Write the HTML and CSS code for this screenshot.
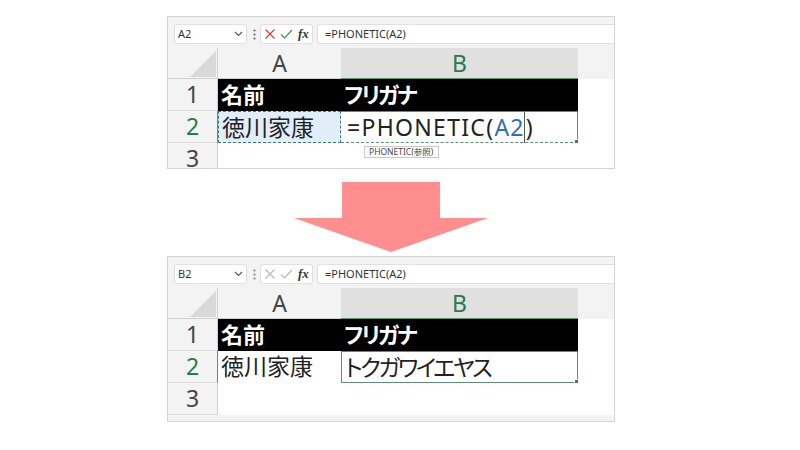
FILE: index.html
```html
<!DOCTYPE html>
<html lang="ja">
<head>
    <meta charset="UTF-8">
    <title>PHONETIC関数</title>
    <link rel="stylesheet" href="styles.css">
</head>
<body>
    <div class="page">
        <!-- 入力中 -->
        <div class="shot shot-top">
            <div class="toolbar">
                <div class="namebox">A2
                    <svg class="chev" width="9" height="6" viewBox="0 0 9 6"><polyline points="1,1 4.5,4.5 8,1" fill="none" stroke="#555" stroke-width="1.1"/></svg>
                </div>
                <svg class="dots" width="3" height="11" viewBox="0 0 3 11"><circle cx="1.5" cy="1.5" r="1.1" fill="#666"/><circle cx="1.5" cy="5.5" r="1.1" fill="#666"/><circle cx="1.5" cy="9.5" r="1.1" fill="#666"/></svg>
                <div class="fxbox">
                    <svg width="12" height="12" viewBox="0 0 12 12"><path d="M1.5 1.5 L10.5 10.5 M10.5 1.5 L1.5 10.5" stroke="#d13438" stroke-width="1.1" fill="none"/></svg>
                    <svg width="13" height="12" viewBox="0 0 13 12"><polyline points="1,6.5 4.5,10 12,2" stroke="#2f8f4f" stroke-width="1.1" fill="none"/></svg>
                    <span class="fx">fx</span>
                </div>
                <div class="formula">=PHONETIC(A2)</div>
            </div>
            <div class="grid">
                <div class="corner"><svg width="26" height="26" viewBox="0 0 26 26"><polygon points="26,0 26,26 0,26" fill="#d8d8d8"/></svg></div>
                <div class="colhead">A</div>
                <div class="colhead sel">B</div>
                <div class="colhead rest"></div>

                <div class="rowhead">1</div>
                <div class="cell title">名前</div>
                <div class="cell title kana">フリガナ</div>
                <div class="cell"></div>

                <div class="rowhead sel">2</div>
                <div class="cell copy">徳川家康</div>
                <div class="cell active editing">=PHONETIC(<span class="ref">A2</span><span class="caret"></span>)
                    <span class="handle"></span>
                    <span class="tip">PHONETIC(参照)</span>
                </div>
                <div class="cell"></div>

                <div class="rowhead">3</div>
                <div class="cell"></div>
                <div class="cell"></div>
                <div class="cell"></div>
            </div>
        </div>

        <div class="arrow">
            <svg width="194" height="70" viewBox="0 0 194 70"><polygon points="48,0 146,0 146,36 194,36 97,70 0,36 48,36" fill="#ff8f8f"/></svg>
        </div>

        <!-- 結果 -->
        <div class="shot shot-bottom">
            <div class="toolbar">
                <div class="namebox">B2
                    <svg class="chev" width="9" height="6" viewBox="0 0 9 6"><polyline points="1,1 4.5,4.5 8,1" fill="none" stroke="#555" stroke-width="1.1"/></svg>
                </div>
                <svg class="dots" width="3" height="11" viewBox="0 0 3 11"><circle cx="1.5" cy="1.5" r="1.1" fill="#888"/><circle cx="1.5" cy="5.5" r="1.1" fill="#888"/><circle cx="1.5" cy="9.5" r="1.1" fill="#888"/></svg>
                <div class="fxbox">
                    <svg width="12" height="12" viewBox="0 0 12 12"><path d="M1.5 1.5 L10.5 10.5 M10.5 1.5 L1.5 10.5" stroke="#b5b5b5" stroke-width="1.1" fill="none"/></svg>
                    <svg width="13" height="12" viewBox="0 0 13 12"><polyline points="1,6.5 4.5,10 12,2" stroke="#b5b5b5" stroke-width="1.1" fill="none"/></svg>
                    <span class="fx">fx</span>
                </div>
                <div class="formula">=PHONETIC(A2)</div>
            </div>
            <div class="grid">
                <div class="corner"><svg width="26" height="26" viewBox="0 0 26 26"><polygon points="26,0 26,26 0,26" fill="#d8d8d8"/></svg></div>
                <div class="colhead">A</div>
                <div class="colhead sel">B</div>
                <div class="colhead rest"></div>

                <div class="rowhead">1</div>
                <div class="cell title">名前</div>
                <div class="cell title kana">フリガナ</div>
                <div class="cell"></div>

                <div class="rowhead sel">2</div>
                <div class="cell">徳川家康</div>
                <div class="cell active kana">トクガワイエヤス<span class="handle"></span></div>
                <div class="cell"></div>

                <div class="rowhead">3</div>
                <div class="cell"></div>
                <div class="cell"></div>
                <div class="cell"></div>
            </div>
        </div>
    </div>
</body>
</html>
```

FILE: styles.css
```css
body {
    margin: 0;
    background: #fff;
    font-family: "Noto Sans", "Noto Sans CJK JP", sans-serif;
    color: #222;
}
.page {
    width: 448px;
    margin-left: 167px;
    padding-top: 16px;
}
.shot {
    box-sizing: border-box;
    border: 1px solid #d4d4d4;
    background: #f3f3f3;
    overflow: hidden;
}
.shot-top { height: 153px; }
.shot-bottom { height: 166px; }

/* 数式バー */
.toolbar {
    display: flex;
    align-items: flex-start;
    height: 31px;
    padding: 7px 0 0 6px;
    box-sizing: border-box;
}
.namebox {
    box-sizing: border-box;
    width: 73px;
    height: 20px;
    background: #fff;
    border: 1px solid #e0e0e0;
    border-radius: 3px;
    font-size: 11px;
    line-height: 18px;
    padding-left: 3px;
    color: #333;
    display: flex;
    justify-content: space-between;
    align-items: center;
    padding-right: 3px;
}
.dots {
    margin: 5px 4px 0 6px;
}
.fxbox {
    box-sizing: border-box;
    width: 53px;
    height: 20px;
    background: #fff;
    border: 1px solid #e0e0e0;
    border-radius: 3px;
    display: flex;
    align-items: center;
    gap: 4px;
    padding-left: 3px;
}
.fx {
    font-family: "Liberation Serif", serif;
    font-style: italic;
    font-weight: bold;
    font-size: 13px;
    color: #333;
    margin-left: 1px;
}
.formula {
    flex: 1;
    box-sizing: border-box;
    height: 20px;
    margin-left: 4px;
    background: #fff;
    border: 1px solid #e0e0e0;
    border-right: none;
    border-radius: 3px 0 0 3px;
    font-size: 11px;
    line-height: 18px;
    padding-left: 7px;
    color: #333;
}

/* シート */
.grid {
    display: grid;
    grid-template-columns: 50px 123px 237px 1fr;
    grid-template-rows: 31px;
    grid-auto-rows: 32px;
}
.corner {
    box-sizing: border-box;
    border-right: 1px solid #d0d0d0;
    border-bottom: 1px solid #d0d0d0;
    display: flex;
    justify-content: flex-end;
    align-items: flex-end;
    padding: 0 1px 1px 0;
}
.colhead {
    box-sizing: border-box;
    border-bottom: 1px solid #d0d0d0;
    text-align: center;
    font-size: 23px;
    line-height: 30px;
    color: #444;
}
.colhead.sel {
    background: #e0e0e0;
    color: #2b7a4b;
    border-bottom: 1px solid #5b9a75;
}
.colhead.rest {
    border-bottom: none;
}
.rowhead {
    box-sizing: border-box;
    border-right: 1px solid #d0d0d0;
    border-bottom: 1px solid #dadada;
    text-align: center;
    font-size: 23px;
    line-height: 24px;
    padding-top: 3px;
    color: #444;
}
.rowhead.sel {
    color: #2b7a4b;
    border-right-color: #4f9a70;
}
.cell {
    position: relative;
    box-sizing: border-box;
    background: #fff;
    font-size: 23px;
    line-height: 30px;
    padding-left: 3px;
    white-space: nowrap;
    font-feature-settings: "palt";
}
.cell.title {
    background: #000;
    color: #fff;
    font-weight: bold;
    font-size: 22px;
}
.cell.kana {
    letter-spacing: -2.5px;
}
.cell.title.kana {
    letter-spacing: -2px;
}
.cell.copy {
    background: #e1edf8;
    border: 1px dashed #3e7d6c;
}
.cell.active {
    border: 1px solid #5c8c7a;
}
.cell.editing {
    border-left: none;
    border-bottom-style: dashed;
    letter-spacing: 1.3px;
    padding-left: 6px;
}
.ref {
    color: #2e6fae;
}
.caret {
    display: inline-block;
    width: 1px;
    height: 31px;
    background: #555;
    vertical-align: middle;
    margin: -4px 1px 0 -1px;
}
.handle {
    position: absolute;
    right: -3px;
    bottom: -3px;
    width: 4px;
    height: 4px;
    background: #3e7d5e;
    border: 1px solid #fff;
}
.tip {
    position: absolute;
    left: 23px;
    top: 34px;
    z-index: 2;
    background: #fff;
    border: 1px solid #c8c8c8;
    font-size: 8.5px;
    line-height: 10px;
    padding: 0 5px 0 4px;
    letter-spacing: 0;
    color: #444;
}

.arrow {
    height: 87px;
    display: flex;
    justify-content: center;
    padding-top: 13px;
    box-sizing: border-box;
}
```
